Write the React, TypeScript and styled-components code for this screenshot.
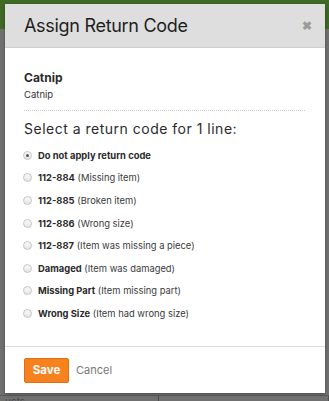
import React from "react";
import styled, { createGlobalStyle } from "styled-components";

const Global = createGlobalStyle`
  html, body { margin: 0; padding: 0; }
  body { font-family: Inter, "Noto Sans", sans-serif; width: 329px; height: 401px; overflow: hidden; background: #6f6f6f; }
`;

const Page = styled.div`
  position: relative;
  width: 329px;
  height: 401px;
  display: flex;
  flex-direction: column;
  background: #707070;
`;

const TopBar = styled.div`
  height: 29px;
  background: #3e6a24;
  flex-shrink: 0;
`;

const BgContent = styled.div`
  flex: 1;
  display: flex;
  flex-direction: column;
  justify-content: flex-end;
`;

const BgRow = styled.div`
  height: 5px;
  border-top: 1px solid #5a5a5a;
  display: flex;
  font-size: 10px;
  color: #4a4a4a;
  overflow: hidden;
`;

const BgCell = styled.div<{ $w: number }>`
  width: ${(p) => p.$w}px;
  border-right: 1px solid #4f4f4f;
  padding-left: 5px;
  line-height: 10px;
`;

const Modal = styled.div`
  position: absolute;
  left: 5px;
  top: 4px;
  width: 320px;
  height: 389px;
  background: #fff;
  display: flex;
  flex-direction: column;
  box-shadow: 0 1px 3px rgba(0, 0, 0, 0.35);
`;

const Header = styled.div`
  height: 44px;
  background: #dedede;
  border-bottom: 1px solid #cfcfcf;
  display: flex;
  align-items: center;
  justify-content: space-between;
  padding: 0 13px 0 19px;
  box-sizing: border-box;
  flex-shrink: 0;
`;

const Title = styled.h1`
  margin: 0;
  font-size: 18px;
  font-weight: 400;
  color: #1e1e1e;
  letter-spacing: -0.3px;
`;

const Close = styled.span`
  font-size: 12px;
  font-weight: 700;
  color: #9a9a9a;
  line-height: 1;
`;

const Body = styled.div`
  flex: 1;
  padding: 22px 19px 0 19px;
  display: flex;
  flex-direction: column;
`;

const ItemName = styled.div`
  font-size: 12px;
  font-weight: 700;
  color: #2a2a2a;
  line-height: 16px;
`;

const ItemSub = styled.div`
  font-size: 9.5px;
  color: #333;
  line-height: 12px;
  margin-top: 3px;
`;

const Divider = styled.div`
  border-top: 1px dotted #c8c8c8;
  margin: 9px 0 0 0;
  width: 281px;
`;

const Prompt = styled.div`
  font-size: 14px;
  letter-spacing: 0.5px;
  color: #2b2b2b;
  margin-top: 9px;
  line-height: 18px;
`;

const Options = styled.div`
  display: flex;
  flex-direction: column;
  margin-top: 6px;
`;

const Option = styled.label`
  display: flex;
  align-items: center;
  height: 22.6px;
  font-size: 9.4px;
  color: #3a3a3a;
  gap: 6px;
  margin-left: -1px;
`;

const Radio = styled.span<{ $checked?: boolean }>`
  width: 7px;
  height: 7px;
  border-radius: 50%;
  border: 1px solid #c4c4c4;
  background: linear-gradient(#fafafa, #e6e6e6);
  display: flex;
  align-items: center;
  justify-content: center;
  flex-shrink: 0;
  &::after {
    content: "";
    width: 3px;
    height: 3px;
    border-radius: 50%;
    background: ${(p) => (p.$checked ? "#555" : "transparent")};
  }
`;

const Code = styled.b`
  font-weight: 700;
  color: #2a2a2a;
`;

const Footer = styled.div`
  height: 46px;
  border-top: 1px solid #dcdcdc;
  display: flex;
  align-items: center;
  padding: 0 19px;
  gap: 7px;
  flex-shrink: 0;
`;

const SaveButton = styled.button`
  width: 45px;
  height: 25px;
  background: #f5821f;
  border: 1px solid #df6f12;
  border-radius: 2px;
  color: #fff;
  font-family: inherit;
  font-weight: 700;
  font-size: 11.5px;
  padding: 0;
  cursor: pointer;
`;

const CancelLink = styled.span`
  font-size: 11px;
  color: #777;
`;

const options: { code: string; desc?: string; checked?: boolean }[] = [
  { code: "Do not apply return code", checked: true },
  { code: "112-884", desc: "(Missing item)" },
  { code: "112-885", desc: "(Broken item)" },
  { code: "112-886", desc: "(Wrong size)" },
  { code: "112-887", desc: "(Item was missing a piece)" },
  { code: "Damaged", desc: "(Item was damaged)" },
  { code: "Missing Part", desc: "(Item missing part)" },
  { code: "Wrong Size", desc: "(Item had wrong size)" },
];

export default function App() {
  return (
    <>
      <Global />
      <Page>
        <TopBar />
        <BgContent>
          <BgRow>
            <BgCell $w={159}>ucts...</BgCell>
            <BgCell $w={170} />
          </BgRow>
        </BgContent>
        <Modal>
          <Header>
            <Title>Assign Return Code</Title>
            <Close>✖</Close>
          </Header>
          <Body>
            <ItemName>Catnip</ItemName>
            <ItemSub>Catnip</ItemSub>
            <Divider />
            <Prompt>Select a return code for 1 line:</Prompt>
            <Options>
              {options.map((o) => (
                <Option key={o.code}>
                  <Radio $checked={o.checked} />
                  <span>
                    <Code>{o.code}</Code>
                    {o.desc ? " " + o.desc : ""}
                  </span>
                </Option>
              ))}
            </Options>
          </Body>
          <Footer>
            <SaveButton>Save</SaveButton>
            <CancelLink>Cancel</CancelLink>
          </Footer>
        </Modal>
      </Page>
    </>
  );
}
